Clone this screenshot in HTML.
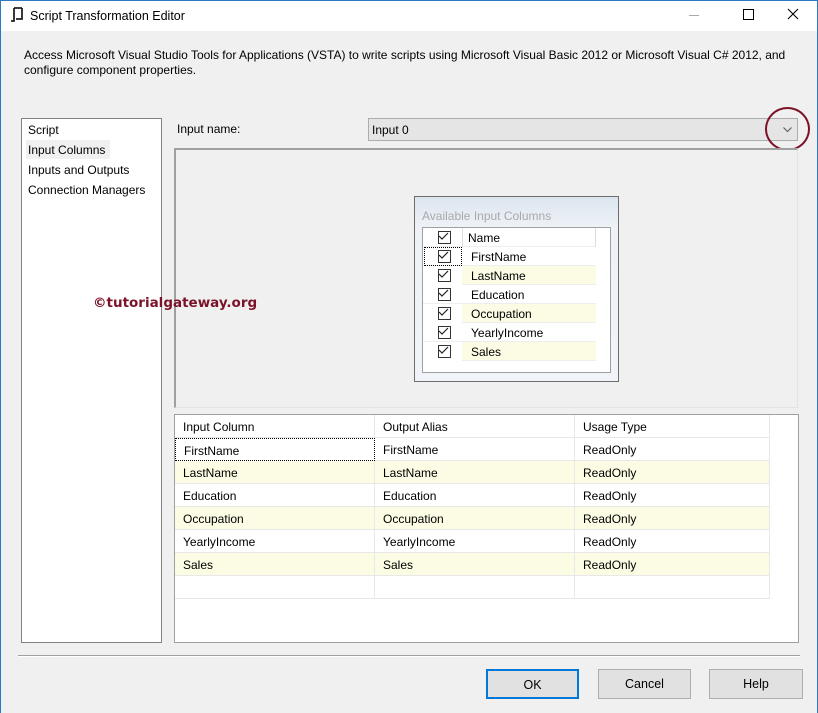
<!DOCTYPE html>
<html><head><meta charset="utf-8">
<style>
*{margin:0;padding:0;box-sizing:border-box}
body{width:818px;height:713px;overflow:hidden;background:#f0f0f0;font-family:"Liberation Sans",sans-serif;font-size:12px;color:#000;position:relative}
.a{position:absolute}
.t{position:absolute;white-space:nowrap;font-size:12px}
.row{position:absolute;left:0;height:23px}
.cell{position:absolute;top:0;height:23px;border-right:1px solid #e8e8e8;border-bottom:1px solid #e8e8e8;padding:5px 0 0 8px;white-space:nowrap}
.y{background:#fcfce4}
.btn{position:absolute;top:669px;height:30px;background:#e1e1e1;border:1px solid #adadad;text-align:center;line-height:28px;font-size:12.5px}
.cb{position:absolute;left:15px;width:13px;height:13px;border:1px solid #333;background:#fff}
.ir{position:absolute;left:0;width:173px;height:19px;border-bottom:1px solid #eee}
.ir span{position:absolute;left:48px;top:3px}
</style></head><body>
<div class="a" style="left:0;top:0;width:818px;height:31px;background:#fff"></div>
<div class="a" style="left:0;top:0;width:1px;height:713px;background:#2b79c2"></div>
<div class="a" style="left:817px;top:0;width:1px;height:713px;background:#2b79c2"></div>
<div class="a" style="left:0;top:0;width:818px;height:1px;background:#2b79c2"></div>
<svg class="a" style="left:10px;top:7px" width="14" height="16" viewBox="0 0 14 16"><path d="M4 1h8M4 1v11M12 1v11H6M4 12v2H1" stroke="#222" stroke-width="1.8" fill="none"/></svg>
<div class="t" style="left:30px;top:9px;font-size:12.5px">Script Transformation Editor</div>
<div class="a" style="left:689px;top:15px;width:10px;height:1px;background:#aaa"></div>
<div class="a" style="left:743px;top:9px;width:11px;height:11px;border:1px solid #000"></div>
<svg class="a" style="left:787px;top:8px" width="12" height="12"><path d="M1 1L11 11M11 1L1 11" stroke="#000" stroke-width="1.1"/></svg>
<div class="t" style="left:24px;top:48px">Access Microsoft Visual Studio Tools for Applications (VSTA) to write scripts using Microsoft Visual Basic 2012 or Microsoft Visual C# 2012, and</div>
<div class="t" style="left:24px;top:63px">configure component properties.</div>
<div class="a" style="left:21px;top:118px;width:141px;height:525px;background:#fff;border:1px solid #828282"></div>
<div class="a" style="left:26px;top:140px;width:84px;height:19px;background:#f0f0f0"></div>
<div class="t" style="left:28px;top:123px">Script</div>
<div class="t" style="left:28px;top:143px">Input Columns</div>
<div class="t" style="left:28px;top:163px">Inputs and Outputs</div>
<div class="t" style="left:28px;top:183px">Connection Managers</div>
<div class="t" style="left:177px;top:122px">Input name:</div>
<div class="a" style="left:368px;top:118px;width:430px;height:23px;background:#e5e5e5;border:1px solid #adadad"></div>
<div class="t" style="left:372px;top:123px">Input 0</div>
<svg class="a" style="left:783px;top:127px" width="9" height="6"><path d="M0.5 0.5L4.5 4.5L8.5 0.5" stroke="#555" fill="none"/></svg>
<div class="a" style="left:765px;top:107px;width:45px;height:44px;border:2.5px solid #7b1328;border-radius:50%"></div>
<div class="a" style="left:174px;top:148px;width:624px;height:260px;background:#f0f0f0;border-top:2px solid #a0a0a0;border-left:2px solid #a0a0a0;border-right:1px solid #e3e3e3;border-bottom:1px solid #e3e3e3"></div>
<div class="a" style="left:414px;top:196px;width:205px;height:186px;border:1px solid #6d6d6d;background:linear-gradient(#dce5ef,#eef2f7 30px,#f0f3f7)"></div>
<div class="t" style="left:422px;top:209px;color:#a9a9a9">Available Input Columns</div>
<div class="a" style="left:422px;top:227px;width:189px;height:146px;background:#fff;border:1px solid #a0a0a0;overflow:hidden">
 <div class="ir" style="top:0"><div class="cb" style="top:3px"></div><div style="position:absolute;left:39px;top:0;width:1px;height:19px;background:#ddd"></div><span style="left:45px">Name</span><div style="position:absolute;left:172px;top:0;width:1px;height:19px;background:#ddd"></div></div>
 <div class="ir" style="top:19px"><div class="a" style="left:1px;top:0;width:38px;height:19px;border:1px dotted #000"></div><div class="cb" style="top:3px"></div><span>FirstName</span></div>
 <div class="ir y" style="top:38px"><div class="a" style="left:0;top:0;width:39px;height:19px;background:#fff"></div><div class="cb" style="top:3px"></div><span>LastName</span></div>
 <div class="ir" style="top:57px"><div class="cb" style="top:3px"></div><span>Education</span></div>
 <div class="ir y" style="top:76px"><div class="a" style="left:0;top:0;width:39px;height:19px;background:#fff"></div><div class="cb" style="top:3px"></div><span>Occupation</span></div>
 <div class="ir" style="top:95px"><div class="cb" style="top:3px"></div><span>YearlyIncome</span></div>
 <div class="ir y" style="top:114px"><div class="a" style="left:0;top:0;width:39px;height:19px;background:#fff"></div><div class="cb" style="top:3px"></div><span>Sales</span></div>
</div>
<svg class="a" style="left:437px;top:230px" width="14" height="140"><g stroke="#222" stroke-width="1.2" fill="none"><path d="M2 6l3 3l6-6"/><path d="M2 25l3 3l6-6"/><path d="M2 44l3 3l6-6"/><path d="M2 63l3 3l6-6"/><path d="M2 82l3 3l6-6"/><path d="M2 101l3 3l6-6"/><path d="M2 120l3 3l6-6"/></g></svg>
<div class="t" style="left:93px;top:295px;color:#7b1328;font-weight:bold;font-size:13.5px;font-family:'DejaVu Sans',sans-serif">©tutorialgateway.org</div>
<div class="a" style="left:174px;top:414px;width:625px;height:229px;background:#fff;border:1px solid #a0a0a0;overflow:hidden">
 <div class="row" style="top:0"><div class="cell" style="left:0;width:200px">Input Column</div><div class="cell" style="left:200px;width:200px">Output Alias</div><div class="cell" style="left:400px;width:195px">Usage Type</div></div>
 <div class="row" style="top:23px"><div class="cell" style="left:0;width:200px;border:1px dotted #000;padding-left:8px">FirstName</div><div class="cell" style="left:200px;width:200px">FirstName</div><div class="cell" style="left:400px;width:195px">ReadOnly</div></div>
 <div class="row" style="top:46px"><div class="cell y" style="left:0;width:200px">LastName</div><div class="cell y" style="left:200px;width:200px">LastName</div><div class="cell y" style="left:400px;width:195px">ReadOnly</div></div>
 <div class="row" style="top:69px"><div class="cell" style="left:0;width:200px">Education</div><div class="cell" style="left:200px;width:200px">Education</div><div class="cell" style="left:400px;width:195px">ReadOnly</div></div>
 <div class="row" style="top:92px"><div class="cell y" style="left:0;width:200px">Occupation</div><div class="cell y" style="left:200px;width:200px">Occupation</div><div class="cell y" style="left:400px;width:195px">ReadOnly</div></div>
 <div class="row" style="top:115px"><div class="cell" style="left:0;width:200px">YearlyIncome</div><div class="cell" style="left:200px;width:200px">YearlyIncome</div><div class="cell" style="left:400px;width:195px">ReadOnly</div></div>
 <div class="row" style="top:138px"><div class="cell y" style="left:0;width:200px">Sales</div><div class="cell y" style="left:200px;width:200px">Sales</div><div class="cell y" style="left:400px;width:195px">ReadOnly</div></div>
 <div class="row" style="top:161px"><div class="cell" style="left:0;width:200px"></div><div class="cell" style="left:200px;width:200px"></div><div class="cell" style="left:400px;width:195px"></div></div>
</div>
<div class="a" style="left:18px;top:655px;width:782px;height:1px;background:#a0a0a0"></div>
<div class="a" style="left:18px;top:656px;width:782px;height:1px;background:#fff"></div>
<div class="btn" style="left:486px;width:93px;border:2px solid #0078d7">OK</div>
<div class="btn" style="left:598px;width:93px">Cancel</div>
<div class="btn" style="left:709px;width:94px">Help</div>
</body></html>
